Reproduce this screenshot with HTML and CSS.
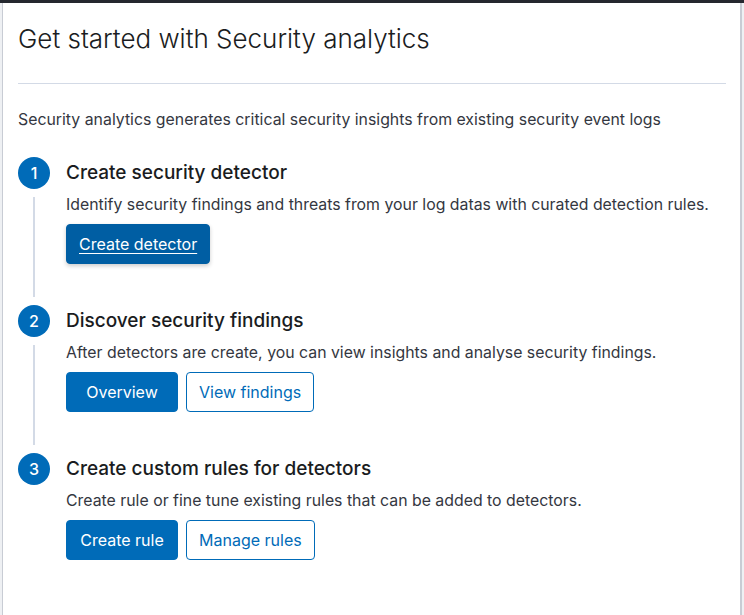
FILE: index.html
```html
<!DOCTYPE html>
<html lang="en">
<head>
    <meta charset="UTF-8">
    <meta name="viewport" content="width=device-width, initial-scale=1.0">
    <title>Security analytics</title>
    <link rel="stylesheet" href="styles.css">
</head>
<body>
    <div class="topbar"></div>
    <div class="modal">
        <h1 class="modal-title">Get started with Security analytics</h1>
        <hr class="divider">
        <p class="intro">Security analytics generates critical security insights from existing security event logs</p>

        <!-- getting started steps -->
        <div class="steps">
            <div class="step">
                <div class="step-marker">
                    <span class="step-number">1</span>
                    <span class="step-line"></span>
                </div>
                <div class="step-body">
                    <h2 class="step-title">Create security detector</h2>
                    <p class="step-text">Identify security findings and threats from your log datas with curated detection rules.</p>
                    <div class="step-actions">
                        <a href="#" class="btn btn-fill btn-focus">Create detector</a>
                    </div>
                </div>
            </div>

            <div class="step">
                <div class="step-marker">
                    <span class="step-number">2</span>
                    <span class="step-line"></span>
                </div>
                <div class="step-body">
                    <h2 class="step-title">Discover security findings</h2>
                    <p class="step-text">After detectors are create, you can view insights and analyse security findings.</p>
                    <div class="step-actions">
                        <a href="#" class="btn btn-fill">Overview</a>
                        <a href="#" class="btn btn-outline">View findings</a>
                    </div>
                </div>
            </div>

            <div class="step step-last">
                <div class="step-marker">
                    <span class="step-number">3</span>
                </div>
                <div class="step-body">
                    <h2 class="step-title">Create custom rules for detectors</h2>
                    <p class="step-text">Create rule or fine tune existing rules that can be added to detectors.</p>
                    <div class="step-actions">
                        <a href="#" class="btn btn-fill">Create rule</a>
                        <a href="#" class="btn btn-outline">Manage rules</a>
                    </div>
                </div>
            </div>
        </div>
    </div>
</body>
</html>
```

FILE: styles.css
```css
body {
    margin: 0;
    background-color: #eef0f3;
    font-family: Inter, "Noto Sans", sans-serif;
    color: #343741;
    height: 615px;
    overflow: hidden;
}

.topbar {
    height: 3px;
    background-color: #25282f;
}

.modal {
    margin-left: 2px;
    width: 740px;
    height: 612px;
    box-sizing: border-box;
    background-color: #fff;
    border-left: 1px solid #c8ccd4;
    border-right: 2px solid #c8ccd4;
    padding: 0 14px 0 15px;
}

.modal-title {
    margin: 0;
    padding-top: 18px;
    font-size: 26px;
    line-height: 36px;
    font-weight: 300;
    color: #1a1c21;
}

.divider {
    margin: 26px 0 0 0;
    border: none;
    border-top: 1px solid #d3dae6;
}

.intro {
    margin: 24px 0 0 0;
    font-size: 15.85px;
    line-height: 24px;
}

.steps {
    margin-top: 25px;
}

.step {
    display: flex;
    gap: 16px;
    height: 148px;
}

.step-marker {
    width: 32px;
    display: flex;
    flex-direction: column;
    align-items: center;
}

.step-number {
    width: 32px;
    height: 32px;
    border-radius: 50%;
    background-color: #006bb8;
    color: #fff;
    font-size: 16px;
    font-weight: 500;
    line-height: 32px;
    text-align: center;
    flex-shrink: 0;
}

.step-line {
    width: 2px;
    background-color: #d3dae6;
    margin-top: 8px;
    height: 100px;
}

.step-title {
    margin: 0;
    font-size: 19px;
    line-height: 32px;
    font-weight: 500;
    color: #1a1c21;
}

.step-text {
    margin: 4px 0 0 0;
    font-size: 15.85px;
    line-height: 24px;
}

.step-actions {
    display: flex;
    gap: 8px;
    margin-top: 7px;
}

.btn {
    display: inline-block;
    box-sizing: border-box;
    height: 40px;
    line-height: 38px;
    padding: 0 12px;
    border-radius: 4px;
    font-size: 16px;
    text-decoration: none;
    border: 1px solid #006bb8;
}

.btn-fill {
    min-width: 112px;
    text-align: center;
    background-color: #006bb8;
    color: #fff;
}

.btn-focus {
    background-color: #005ea3;
    border-color: #005ea3;
    text-decoration: underline;
    text-underline-offset: 3px;
    box-shadow: 0 2px 4px rgba(0, 0, 0, 0.2);
}

.btn-outline {
    background-color: #fff;
    color: #006bb8;
}
```
